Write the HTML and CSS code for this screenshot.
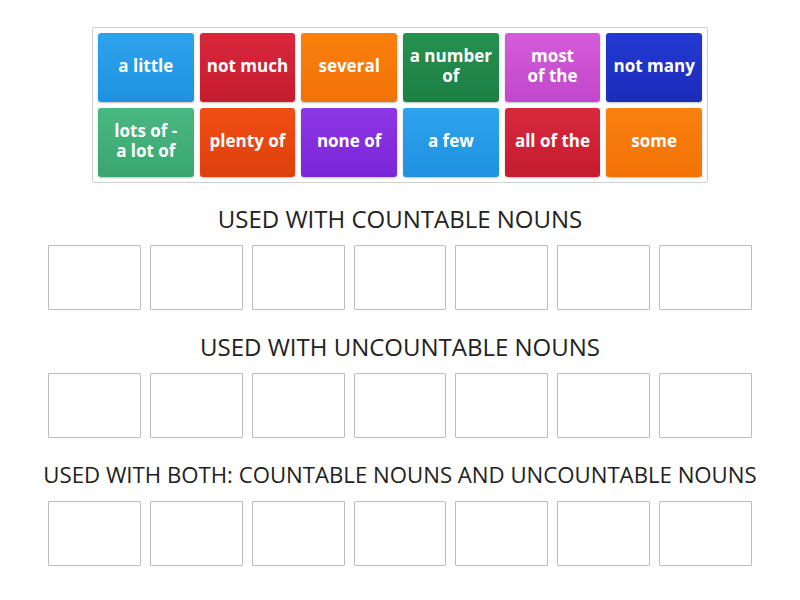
FILE: index.html
```html
<!DOCTYPE html>
<html>
<head>
<meta charset="utf-8">
<link rel="stylesheet" href="styles.css">
</head>
<body>
<div class="page">
  <div class="bank">
    <div class="tile t-blue">a little</div>
    <div class="tile t-red">not much</div>
    <div class="tile t-orange">several</div>
    <div class="tile t-green">a number of</div>
    <div class="tile t-pink">most<br>of the</div>
    <div class="tile t-navy">not many</div>
    <div class="tile t-mint">lots of -<br>a lot of</div>
    <div class="tile t-redorange">plenty of</div>
    <div class="tile t-purple">none of</div>
    <div class="tile t-blue">a few</div>
    <div class="tile t-red">all of the</div>
    <div class="tile t-orange">some</div>
  </div>

  <div class="group first">
    <h2 class="title">USED WITH COUNTABLE NOUNS</h2>
    <div class="slots">
      <div class="slot"></div><div class="slot"></div><div class="slot"></div><div class="slot"></div><div class="slot"></div><div class="slot"></div><div class="slot"></div>
    </div>
  </div>
  <div class="group">
    <h2 class="title">USED WITH UNCOUNTABLE NOUNS</h2>
    <div class="slots">
      <div class="slot"></div><div class="slot"></div><div class="slot"></div><div class="slot"></div><div class="slot"></div><div class="slot"></div><div class="slot"></div>
    </div>
  </div>
  <div class="group">
    <h2 class="title small">USED WITH BOTH: COUNTABLE NOUNS AND UNCOUNTABLE NOUNS</h2>
    <div class="slots">
      <div class="slot"></div><div class="slot"></div><div class="slot"></div><div class="slot"></div><div class="slot"></div><div class="slot"></div><div class="slot"></div>
    </div>
  </div>
</div>
</body>
</html>
```

FILE: styles.css
```css
html, body {
  margin: 0;
  padding: 0;
  background: #ffffff;
}
body {
  font-family: "Open Sans", "Noto Sans", "Liberation Sans", sans-serif;
  color: #222222;
}
.page {
  width: 800px;
  padding-top: 27px;
  display: flex;
  flex-direction: column;
  align-items: center;
}
.bank {
  width: 604px;
  padding: 5px;
  border: 1px solid #d0d0d0;
  border-radius: 2px;
  display: grid;
  grid-template-columns: repeat(6, 1fr);
  grid-auto-rows: 69px;
  gap: 6px;
}
.tile {
  border-radius: 3px;
  color: #ffffff;
  font-weight: 700;
  font-size: 17px;
  line-height: 20px;
  display: flex;
  align-items: center;
  justify-content: center;
  text-align: center;
  padding: 0 4px 3px;
  box-shadow: 0 1px 2px rgba(0, 0, 0, 0.25);
}
.t-blue { background: linear-gradient(#2ea3ec, #1f91e0); }
.t-red { background: linear-gradient(#d8283c, #c51c30); }
.t-orange { background: linear-gradient(#f9800f, #f37206); }
.t-green { background: linear-gradient(#249150, #1d7f43); }
.t-pink { background: linear-gradient(#d45cdb, #c247cb); }
.t-navy { background: linear-gradient(#2339d0, #1b2cbc); }
.t-mint { background: linear-gradient(#4ab882, #3aa56f); }
.t-redorange { background: linear-gradient(#f04e14, #de400c); }
.t-purple { background: linear-gradient(#8d37e4, #7a25d8); }

.group {
  width: 704px;
  margin-top: 22px;
  display: flex;
  flex-direction: column;
  align-items: center;
}
.group.first { margin-top: 21px; }
.title {
  margin: 0;
  font-size: 24px;
  font-weight: 400;
  line-height: 30px;
  color: #222222;
  white-space: nowrap;
}
.title.small { font-size: 22.2px; }
.slots {
  margin-top: 11px;
  width: 704px;
  display: flex;
  gap: 9px;
}
.slot {
  flex: 1;
  height: 63px;
  border: 1px solid #bdbdbd;
  border-radius: 1px;
  background: #ffffff;
}
```
